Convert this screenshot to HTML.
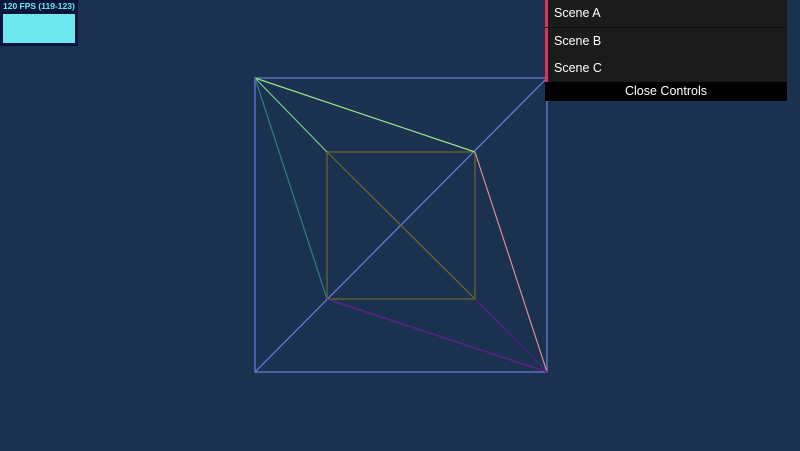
<!DOCTYPE html>
<html><head><meta charset="utf-8"><style>
html,body{margin:0;padding:0;width:800px;height:451px;overflow:hidden;background:#1a3150;font-family:"Liberation Sans",sans-serif}
#fps{position:absolute;left:0;top:0;width:78px;height:46px;background:#07163a}
#fps .t{position:absolute;left:3px;top:1px;font-size:8.5px;font-weight:bold;color:#6ee8ee;white-space:nowrap}
#fps .g{position:absolute;left:3px;top:14px;width:72px;height:29px;background:#6ee8ee}
#panel{position:absolute;left:545px;top:0;width:242px;height:101px;background:#111}
.row{position:absolute;left:0;height:27px;background:#1b1b1b;border-left:3px solid #e0325a;color:#fff;font-size:12.5px;line-height:27px;padding-left:6px;box-sizing:border-box;width:242px}
.close{position:absolute;left:0;top:82px;width:242px;height:19px;background:#000;color:#fff;font-size:12.5px;line-height:19px;text-align:center}
</style></head><body>
<svg width="800" height="451" style="position:absolute;left:0;top:0">
<g fill="none" stroke-width="1.2">
<rect x="255" y="78" width="292" height="294" stroke="#6f7fe0"/>
<line x1="255" y1="372" x2="547" y2="78" stroke="#6f7fe0"/>
<rect x="327" y="152" width="148" height="147" stroke="#6b6a2a"/>
<line x1="327" y1="152" x2="475" y2="299" stroke="#6b6a2a"/>
<line x1="255" y1="78" x2="475" y2="152" stroke="#9be28a"/>
<line x1="255" y1="78" x2="327" y2="152" stroke="#7cc88a"/>
<line x1="255" y1="78" x2="327" y2="299" stroke="#2f7d85"/>
<line x1="475" y1="152" x2="547" y2="372" stroke="#e08f99"/>
<line x1="327" y1="299" x2="547" y2="372" stroke="#6a1e8a"/>
<line x1="475" y1="299" x2="547" y2="372" stroke="#5a1e80"/>
</g></svg>
<div id="fps"><div class="t">120 FPS (119-123)</div><div class="g"></div></div>
<div id="panel">
<div class="row" style="top:0">Scene A</div>
<div class="row" style="top:28px">Scene B</div>
<div class="row" style="top:55px">Scene C</div>
<div class="close">Close Controls</div>
</div>
</body></html>
